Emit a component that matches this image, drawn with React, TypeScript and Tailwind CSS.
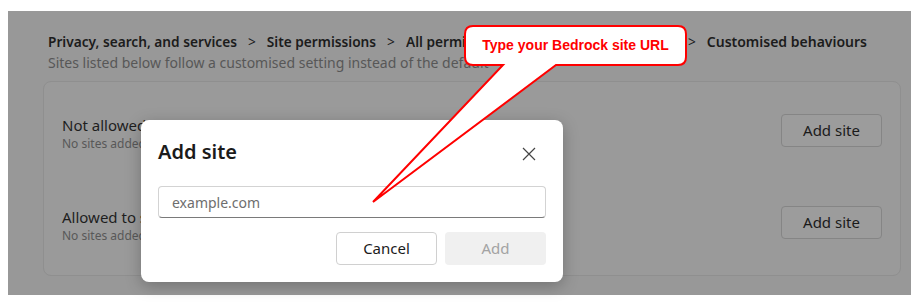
import React from "react";

const font = { fontFamily: '"Noto Sans", "Open Sans", sans-serif' };

function Row({ title, sub }: { title: string; sub: string }) {
  return (
    <div className="flex h-[92px] items-center justify-between pl-[18px] pr-[18px]">
      <div className="flex flex-col pt-[7px]">
        <div className="text-[15px] leading-[19px] text-[#1e1e1e]">{title}</div>
        <div className="text-[12px] leading-[17px] text-[#585858]">{sub}</div>
      </div>
      <div className="flex h-[33px] w-[101px] items-center justify-center rounded-[4px] border border-[#858585] bg-[#9c9c9c] text-[15px] text-[#1a1a1a]">
        Add site
      </div>
    </div>
  );
}

export default function App() {
  return (
    <div className="relative h-[302px] w-[918px] overflow-hidden bg-white" style={font}>
      <div className="ml-[8px] mt-[11px] h-[284px] w-[903px] bg-[#989898] pl-[35px] pt-[20px]">
        <div className="ml-[5px] flex w-[819px] items-center gap-[11px] whitespace-nowrap text-[13.7px] font-semibold leading-[22px] text-[#1c1c1c]">
          <span>Privacy, search, and services</span>
          <span className="font-normal">&gt;</span>
          <span>Site permissions</span>
          <span className="font-normal">&gt;</span>
          <span className="min-w-0 flex-1 overflow-hidden">All permissions&nbsp;&nbsp;&gt;&nbsp;&nbsp;File editing</span>
          <span className="font-normal">&gt;</span>
          <span className="text-[14px]">Customised behaviours</span>
        </div>
        <div className="ml-[5px] whitespace-nowrap text-[14px] leading-[20px] text-[#575757]">
          Sites listed below follow a customised setting instead of the default
        </div>
        <div className="mt-[8px] h-[195px] w-[858px] rounded-[8px] border border-[#8f8f8f] bg-[#9a9a9a] pt-[2px]">
          <Row title="Not allowed to save changes to files or folders" sub="No sites added" />
          <Row title="Allowed to save changes to files or folders" sub="No sites added" />
        </div>
      </div>

      {/* dialog */}
      <div className="absolute left-[141px] top-[120px] flex h-[162px] w-[422px] flex-col rounded-[8px] bg-white px-[17px] pt-[16px] shadow-[0_4px_16px_rgba(0,0,0,0.25)]">
        <div className="flex items-center justify-between">
          <div className="text-[20px] font-semibold leading-[32px] text-[#1b1b1b]">Add site</div>
          <svg width="14" height="14" viewBox="0 0 14 14" className="mr-[10px] mt-[3px]">
            <path d="M1 1 L13 13 M13 1 L1 13" stroke="#444" strokeWidth="1.2" />
          </svg>
        </div>
        <div className="mt-[18px] flex h-[32px] items-center rounded-[4px] border border-[#d3d3d3] border-b-[#7a7a7a] px-[13px] text-[14px] text-[#6e6e6e]">
          example.com
        </div>
        <div className="mt-[14px] flex justify-end gap-[8px]">
          <div className="flex h-[33px] w-[101px] items-center justify-center rounded-[4px] border border-[#d0d0d0] text-[15px] text-[#1b1b1b]">
            Cancel
          </div>
          <div className="flex h-[33px] w-[101px] items-center justify-center rounded-[4px] bg-[#f0f0f0] text-[15px] text-[#a3a3a3]">
            Add
          </div>
        </div>
      </div>

      {/* callout */}
      <svg className="pointer-events-none absolute left-0 top-0" width="918" height="302" viewBox="0 0 918 302">
        <path
          d="M473 26 H678 Q686 26 686 34 V57 Q686 65 678 65 H556 L373 202 L503 65 H473 Q465 65 465 57 V34 Q465 26 473 26 Z"
          fill="white"
          stroke="#ff0000"
          strokeWidth="2"
          strokeLinejoin="miter"
        />
      </svg>
      <div
        className="absolute left-[465px] top-[26px] flex h-[39px] w-[221px] items-center justify-center text-[14px] font-bold text-[#ff0000]"
        style={{ fontFamily: '"Liberation Sans", Arial, sans-serif' }}
      >
        Type your Bedrock site URL
      </div>
    </div>
  );
}
